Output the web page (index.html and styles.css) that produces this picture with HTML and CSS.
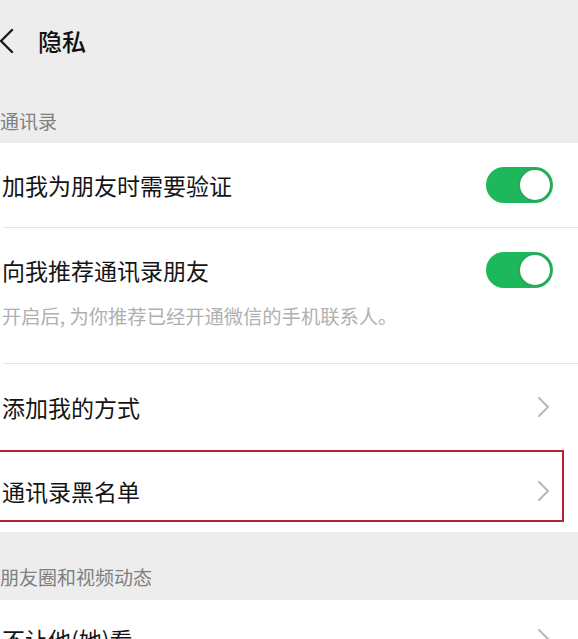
FILE: index.html
```html
<!DOCTYPE html>
<html lang="zh-CN">
<head>
<meta charset="utf-8">
<title>隐私</title>
<link rel="stylesheet" href="styles.css">
</head>
<body>
<div class="page">
  <header class="nav">
    <svg class="back" width="16" height="26" viewBox="0 0 16 26"><path d="M13 2 L2 13 L13 24" fill="none" stroke="#1a1a1a" stroke-width="2.4" stroke-linecap="round" stroke-linejoin="round"/></svg>
    <h1 class="title">隐私</h1>
  </header>

  <div class="section-label first">通讯录</div>
  <div class="group">
    <div class="row">
      <span class="row-text">加我为朋友时需要验证</span>
      <span class="switch"><span class="knob"></span></span>
    </div>
    <div class="divider"></div>
    <div class="row tall">
      <div class="row-main">
        <span class="row-text">向我推荐通讯录朋友</span>
        <span class="switch"><span class="knob"></span></span>
      </div>
      <div class="row-sub">开启后, 为你推荐已经开通微信的手机联系人。</div>
    </div>
    <div class="divider"></div>
    <div class="row r3">
      <span class="row-text">添加我的方式</span>
      <svg class="chev" width="14" height="22" viewBox="0 0 14 22"><path d="M2 2 L11 11 L2 20" fill="none" stroke="#b8b8b8" stroke-width="2" stroke-linecap="round" stroke-linejoin="round"/></svg>
    </div>
    <div class="row r4 highlighted">
      <span class="row-text">通讯录黑名单</span>
      <svg class="chev" width="14" height="22" viewBox="0 0 14 22"><path d="M2 2 L11 11 L2 20" fill="none" stroke="#b8b8b8" stroke-width="2" stroke-linecap="round" stroke-linejoin="round"/></svg>
      <div class="mark"></div>
    </div>
  </div>

  <div class="section-label second">朋友圈和视频动态</div>
  <div class="group">
    <div class="row r5">
      <span class="row-text">不让他(她)看</span>
      <svg class="chev" width="14" height="22" viewBox="0 0 14 22"><path d="M2 2 L11 11 L2 20" fill="none" stroke="#b8b8b8" stroke-width="2" stroke-linecap="round" stroke-linejoin="round"/></svg>
    </div>
  </div>
</div>
</body>
</html>
```

FILE: styles.css
```css
* { box-sizing: border-box; margin: 0; padding: 0; }
html, body {
  width: 578px;
  height: 639px;
  overflow: hidden;
  background: #ededed;
  font-family: "Noto Sans CJK SC", "Noto Sans", sans-serif;
  color: #191919;
}
.page { width: 578px; }

.nav {
  height: 84px;
  display: flex;
  align-items: center;
  position: relative;
}
.back { margin-left: -1px; margin-top: -2px; }
.title {
  margin-left: 23px;
  font-size: 24px;
  font-weight: 500;
  line-height: 30px;
  color: #111;
  margin-top: -2px;
}

.section-label {
  font-size: 19px;
  line-height: 22px;
  color: #808080;
  padding-left: 0;
}
.section-label.first { padding-top: 26px; padding-bottom: 11px; }
.section-label.second { padding-top: 34px; padding-bottom: 12px; }

.group { background: #fff; }

.row {
  display: flex;
  align-items: center;
  justify-content: space-between;
  height: 84px;
  padding-left: 2px;
  padding-right: 25px;
  position: relative;
}
.row-text {
  font-size: 23px;
  line-height: 30px;
  color: #141414;
}
.row.tall {
  display: block;
  height: auto;
  padding-top: 22px;
  padding-bottom: 34px;
}
.row-main {
  display: flex;
  align-items: center;
  justify-content: space-between;
  height: 40px;
}
.row-sub {
  margin-top: 13px;
  font-size: 19.3px;
  line-height: 26px;
  color: #b0b0b0;
}
.row.r3 { height: 86px; padding-right: 27px; }
.row.r4 { height: 82px; padding-right: 27px; }
.row.r5 { height: 78px; padding-right: 27px; }

.divider {
  height: 1px;
  background: #e6e6e6;
  margin-left: 3px;
}

.switch {
  width: 67px;
  height: 36px;
  border-radius: 18px;
  background: #1db85c;
  position: relative;
  display: block;
  flex: none;
}
.knob {
  position: absolute;
  right: 1px;
  top: 1px;
  width: 34px;
  height: 34px;
  border-radius: 50%;
  background: #fff;
  border: 2px solid #2aa65c;
}

.chev { flex: none; }

.mark {
  position: absolute;
  left: -6px;
  top: 0;
  width: 570px;
  height: 72px;
  border: 2px solid #b5232b;
  pointer-events: none;
}
```
